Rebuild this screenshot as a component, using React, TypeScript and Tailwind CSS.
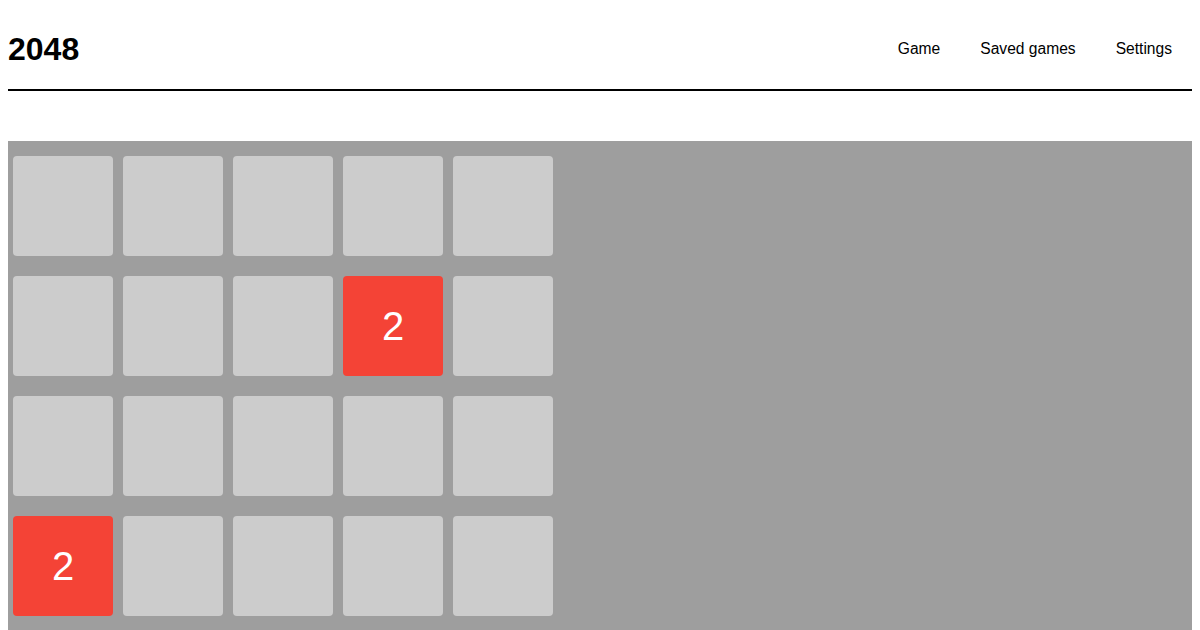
import React from "react";

const board: (number | null)[][] = [
  [null, null, null, null, null],
  [null, null, null, 2, null],
  [null, null, null, null, null],
  [2, null, null, null, null],
];

export default function App() {
  return (
    <div className="p-2 font-['Liberation_Sans',Arial,sans-serif] text-black bg-white min-h-screen">
      <header className="flex items-center justify-between h-[83px] border-b-2 border-black">
        <h1 className="text-[32px] font-bold leading-none">2048</h1>
        <nav className="flex text-[15.6px] pt-[1px]">
          <a className="px-5">Game</a>
          <a className="px-5">Saved games</a>
          <a className="px-5">Settings</a>
        </nav>
      </header>
      <main className="mt-[50px] bg-[#9e9e9e] pt-[15px] pb-[15px] pl-[5px] flex flex-col gap-[20px]">
        {board.map((row, r) => (
          <div key={r} className="flex gap-[10px]">
            {row.map((v, c) => (
              <div
                key={c}
                className={
                  v
                    ? "w-[100px] h-[100px] rounded-[4px] bg-[#f44336] text-white text-[40px] flex items-center justify-center"
                    : "w-[100px] h-[100px] rounded-[4px] bg-[#cccccc]"
                }
              >
                {v ?? ""}
              </div>
            ))}
          </div>
        ))}
      </main>
    </div>
  );
}
